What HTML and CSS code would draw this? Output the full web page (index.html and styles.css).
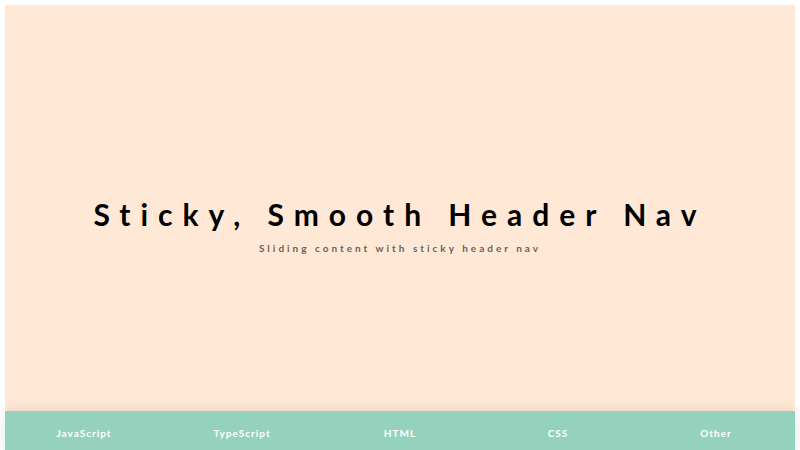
FILE: index.html
```html
<!DOCTYPE html>
<html lang="en">
<head>
  <meta charset="UTF-8" />
  <meta name="viewport" content="width=device-width, initial-scale=1.0"/>
  <title>Sticky, Smooth Header Nav</title>
  <link rel="stylesheet" href="styles.css">
</head>
<body>

<section class="hero">
  <div class="hero-text">
    <h1>Sticky, Smooth Header Nav</h1>
    <h3>Sliding content with sticky header nav</h3>
  </div>
  <nav class="hero-tabs">
    <a class="hero-tab" href="#javascript">JavaScript</a>
    <a class="hero-tab" href="#typescript">TypeScript</a>
    <a class="hero-tab" href="#html">HTML</a>
    <a class="hero-tab" href="#css">CSS</a>
    <a class="hero-tab" href="#other">Other</a>
  </nav>
</section>

</body>
</html>
```

FILE: styles.css
```css
:root {
  --hero-bg: #ffe8d6;
  --nav-bg: #94d2bd;
  --nav-text: #fff;
}

* {
  box-sizing: border-box;
}

body {
  margin: 0;
  padding: 5px 5px 0;
  font-family: Lato, sans-serif;
  background: #fff;
}

.hero {
  display: flex;
  flex-direction: column;
  height: calc(100vh - 5px);
  background: var(--hero-bg);
}

.hero-text {
  flex: 1;
  display: flex;
  flex-direction: column;
  justify-content: center;
  padding-top: 36px;
  text-align: center;
}

.hero-text h1 {
  margin: 0;
  font-size: 30px;
  line-height: 40px;
  letter-spacing: 10px;
  color: #000;
}

.hero-text h3 {
  margin: 4px 0 0;
  font-size: 10px;
  line-height: 20px;
  letter-spacing: 3px;
  color: #000;
  opacity: 0.6;
}

/* Tabs */
.hero-tabs {
  display: flex;
  background: var(--nav-bg);
  box-shadow: 0 0 15px rgba(0, 0, 0, 0.1);
}

.hero-tab {
  flex: 1;
  padding-top: 5px;
  font-size: 10px;
  font-weight: bold;
  line-height: 34px;
  letter-spacing: 1px;
  text-align: center;
  text-decoration: none;
  color: var(--nav-text);
}
```
